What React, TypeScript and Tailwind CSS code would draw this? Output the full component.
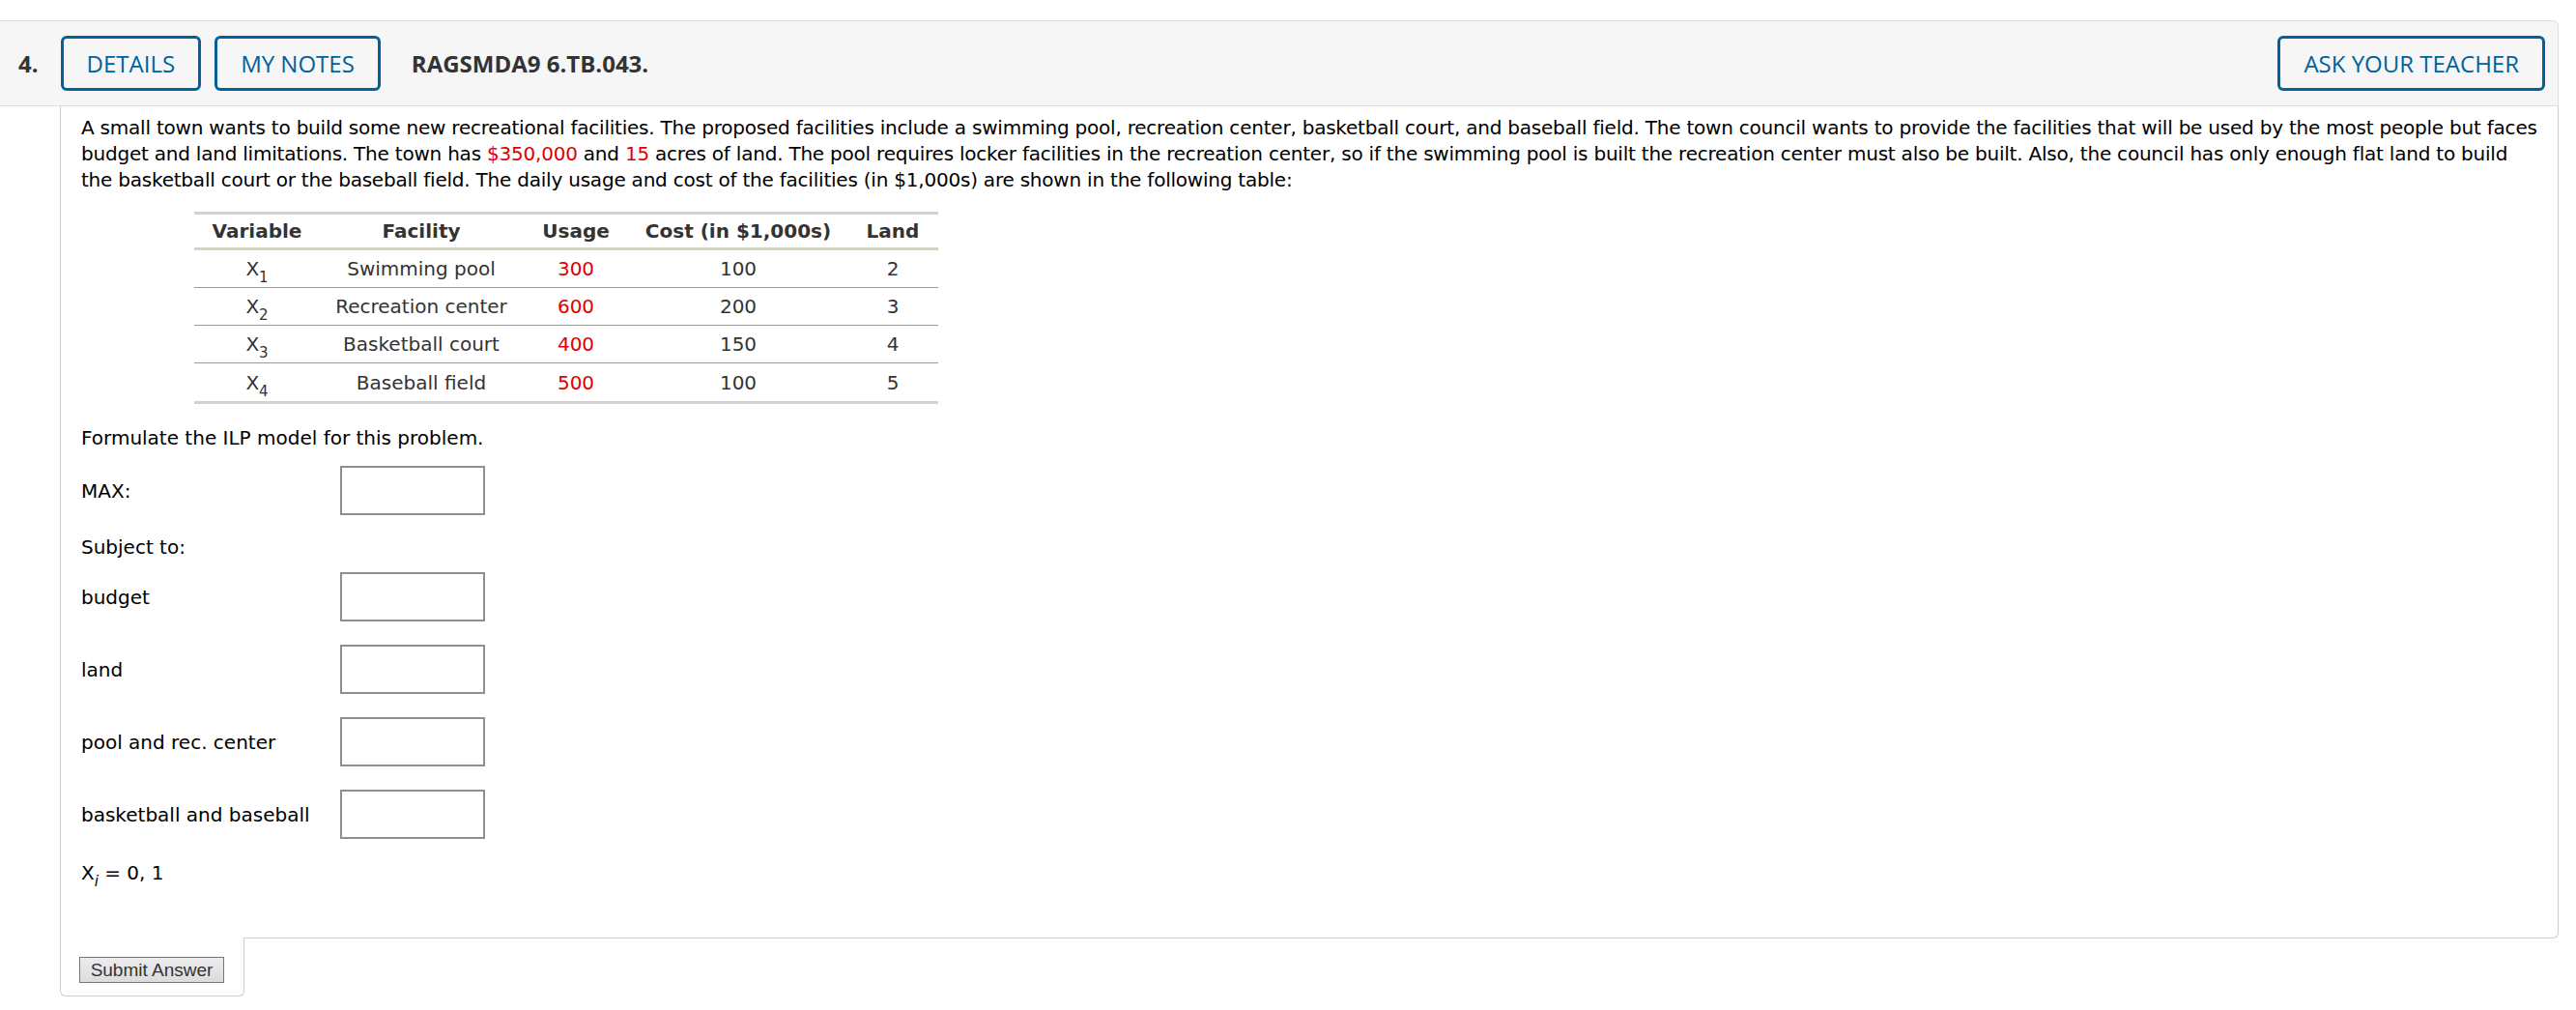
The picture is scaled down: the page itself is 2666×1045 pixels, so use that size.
import React from 'react';

const facilities = [
  { n: '1', name: 'Swimming pool', usage: 300, cost: 100, land: 2 },
  { n: '2', name: 'Recreation center', usage: 600, cost: 200, land: 3 },
  { n: '3', name: 'Basketball court', usage: 400, cost: 150, land: 4 },
  { n: '4', name: 'Baseball field', usage: 500, cost: 100, land: 5 },
];

const constraints = ['budget', 'land', 'pool and rec. center', 'basketball and baseball'];

const HeaderButton = ({ label }: { label: string }) => (
  <button className="h-[57px] px-[24px] rounded-md border-[3px] border-[#00629b] text-[#00629b] text-[24px] leading-none bg-transparent">
    {label}
  </button>
);

const AnswerBox = () => <input type="text" className="w-[150px] h-[51px] bg-white border-2 border-[#8f8f8f] outline-none" />;

export default function App() {
  return (
    <div className="min-h-screen bg-white pt-[21px] pr-[18px] font-['DejaVu_Sans',Verdana,sans-serif] text-[20px] text-black">
      {/* question header */}
      <div className="h-[89px] flex items-center border-y border-r border-[#dddddd] rounded-tr-md bg-[#f6f6f6] pl-[19px] pr-[13px] font-['Open_Sans',sans-serif]">
        <span className="text-[24px] font-bold text-[#333333] mr-[23px]">4.</span>
        <div className="flex gap-[14px]">
          <HeaderButton label="DETAILS" />
          <HeaderButton label="MY NOTES" />
        </div>
        <span className="ml-[32px] text-[24px] font-bold text-[#333333]">RAGSMDA9 6.TB.043.</span>
        <div className="ml-auto">
          <HeaderButton label="ASK YOUR TEACHER" />
        </div>
      </div>

      {/* question body */}
      <div className="ml-[62px] border-x border-b border-[#cccccc] rounded-br-md pl-[21px] pt-[9px] pb-[51px]">
        <p className="leading-[27px] whitespace-nowrap tracking-[-0.22px]">
          A small town wants to build some new recreational facilities. The proposed facilities include a swimming pool, recreation center, basketball court, and baseball field. The town council wants to provide the facilities that will be used by the most people but faces
          <br />
          budget and land limitations. The town has <span className="text-[#e00000]">$350,000</span> and <span className="text-[#e00000]">15</span> acres of land. The pool requires locker facilities in the recreation center, so if the swimming pool is built the recreation center must also be built. Also, the council has only enough flat land to build
          <br />
          the basketball court or the baseball field. The daily usage and cost of the facilities (in $1,000s) are shown in the following table:
        </p>

        <div className="mt-[19px] ml-[117px] w-[770px] border-y-[3px] border-[#d6d2c8] text-[#333333]">
          <div className="flex h-[37px] items-center border-b-[3px] border-[#d6d2c8] font-bold text-center">
            <div className="w-[130px]">Variable</div>
            <div className="w-[210px]">Facility</div>
            <div className="w-[110px]">Usage</div>
            <div className="w-[226px]">Cost (in $1,000s)</div>
            <div className="w-[94px]">Land</div>
          </div>
          {facilities.map((f, i) => (
            <div
              key={f.n}
              className={`flex h-[39px] items-center text-center ${i < facilities.length - 1 ? 'border-b border-[#9a9a9a]' : ''}`}
            >
              <div className="w-[130px]">
                X<span className="relative top-[7px] text-[15px]">{f.n}</span>
              </div>
              <div className="w-[210px]">{f.name}</div>
              <div className="w-[110px] text-[#e00000]">{f.usage}</div>
              <div className="w-[226px]">{f.cost}</div>
              <div className="w-[94px]">{f.land}</div>
            </div>
          ))}
        </div>

        <p className="mt-[22px] leading-[27px]">Formulate the ILP model for this problem.</p>

        <div className="mt-[15px] flex items-center">
          <span className="w-[268px]">MAX:</span>
          <AnswerBox />
        </div>

        <p className="mt-[20px] mb-[12px] leading-[27px]">Subject to:</p>

        <div className="flex flex-col gap-[24px]">
          {constraints.map((c) => (
            <div key={c} className="flex items-center">
              <span className="w-[268px]">{c}</span>
              <AnswerBox />
            </div>
          ))}
        </div>

        <p className="mt-[22px] leading-[27px]">
          X<span className="relative top-[7px] text-[15px] italic">i</span> = 0, 1
        </p>
      </div>

      {/* submit tab */}
      <div className="relative -mt-px ml-[62px] w-[191px] bg-white border-x border-b border-[#cccccc] rounded-b-md pl-[19px] pt-[18px] pb-[12px]">
        <button className="w-[150px] h-[27px] border border-[#767676] bg-gradient-to-b from-[#ececec] to-[#dcdcdc] text-[#333333] text-[19px] leading-none font-['Liberation_Sans',Arial,sans-serif]">
          Submit Answer
        </button>
      </div>
    </div>
  );
}
